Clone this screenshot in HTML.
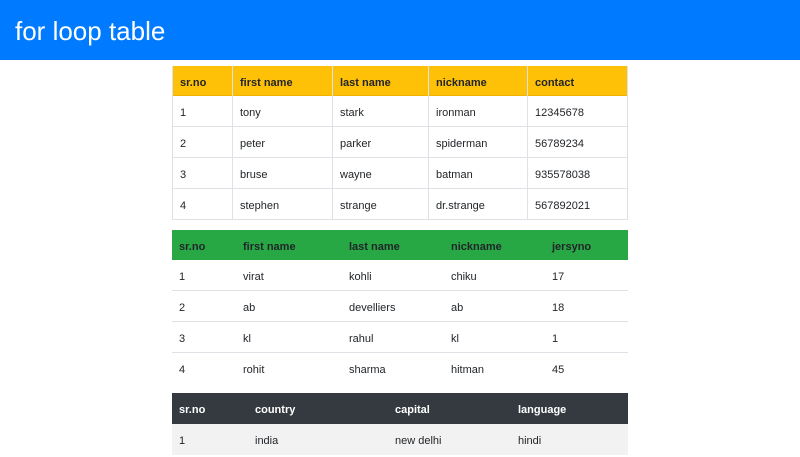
<!DOCTYPE html>
<html><head><style>
*{margin:0;padding:0;box-sizing:border-box}
body{width:800px;height:450px;overflow:hidden;background:#fff;font-family:"Liberation Sans","DejaVu Sans",sans-serif;font-size:11px;color:#212529;position:relative}
.hd{position:absolute;left:0;top:0;width:800px;height:60px;background:#007bff;color:#fff;font-size:26px;padding:16px 0 0 15px}
.t{position:absolute;left:172px;width:456px}
.r{position:relative;height:31px;border-bottom:1px solid #dee2e6}
.r span{position:absolute;top:2px;line-height:31px;white-space:nowrap}
.h span{font-weight:bold}
.b .c{position:absolute;top:0;bottom:0;width:1px;background:#dee2e6}
</style></head><body>
<div class="hd">for loop table</div>

<div class="t b" style="top:66px;border:1px solid #dee2e6;border-top:0">
 <div class="r h" style="background:#ffc107;height:30px;border-bottom:1px solid #f0b400"><span style="left:7px;line-height:30px">sr.no</span><span style="left:67px;line-height:30px">first name</span><span style="left:167px;line-height:30px">last name</span><span style="left:263px;line-height:30px">nickname</span><span style="left:362px;line-height:30px">contact</span></div>
 <div class="r"><span style="left:7px">1</span><span style="left:67px">tony</span><span style="left:167px">stark</span><span style="left:263px">ironman</span><span style="left:362px">12345678</span></div>
 <div class="r"><span style="left:7px">2</span><span style="left:67px">peter</span><span style="left:167px">parker</span><span style="left:263px">spiderman</span><span style="left:362px">56789234</span></div>
 <div class="r"><span style="left:7px">3</span><span style="left:67px">bruse</span><span style="left:167px">wayne</span><span style="left:263px">batman</span><span style="left:362px">935578038</span></div>
 <div class="r" style="border-bottom:0;height:30px"><span style="left:7px;line-height:30px">4</span><span style="left:67px;line-height:30px">stephen</span><span style="left:167px;line-height:30px">strange</span><span style="left:263px;line-height:30px">dr.strange</span><span style="left:362px;line-height:30px">567892021</span></div>
 <div class="c" style="left:59px"></div><div class="c" style="left:159px"></div><div class="c" style="left:255px"></div><div class="c" style="left:354px"></div>
</div>

<div class="t" style="top:230px">
 <div class="r h" style="background:#28a745;height:30px;border-bottom:0"><span style="left:7px;line-height:30px">sr.no</span><span style="left:71px;line-height:30px">first name</span><span style="left:177px;line-height:30px">last name</span><span style="left:279px;line-height:30px">nickname</span><span style="left:380px;line-height:30px">jersyno</span></div>
 <div class="r"><span style="left:7px">1</span><span style="left:71px">virat</span><span style="left:177px">kohli</span><span style="left:279px">chiku</span><span style="left:380px">17</span></div>
 <div class="r"><span style="left:7px">2</span><span style="left:71px">ab</span><span style="left:177px">develliers</span><span style="left:279px">ab</span><span style="left:380px">18</span></div>
 <div class="r"><span style="left:7px">3</span><span style="left:71px">kl</span><span style="left:177px">rahul</span><span style="left:279px">kl</span><span style="left:380px">1</span></div>
 <div class="r" style="border-bottom:0"><span style="left:7px">4</span><span style="left:71px">rohit</span><span style="left:177px">sharma</span><span style="left:279px">hitman</span><span style="left:380px">45</span></div>
</div>

<div class="t" style="top:393px">
 <div class="r h" style="background:#343a40;color:#fff;border-bottom:0"><span style="left:7px">sr.no</span><span style="left:83px">country</span><span style="left:223px">capital</span><span style="left:346px">language</span></div>
 <div class="r" style="background:#f2f2f2;border-bottom:0"><span style="left:7px">1</span><span style="left:83px">india</span><span style="left:223px">new delhi</span><span style="left:346px">hindi</span></div>
</div>
</body></html>
